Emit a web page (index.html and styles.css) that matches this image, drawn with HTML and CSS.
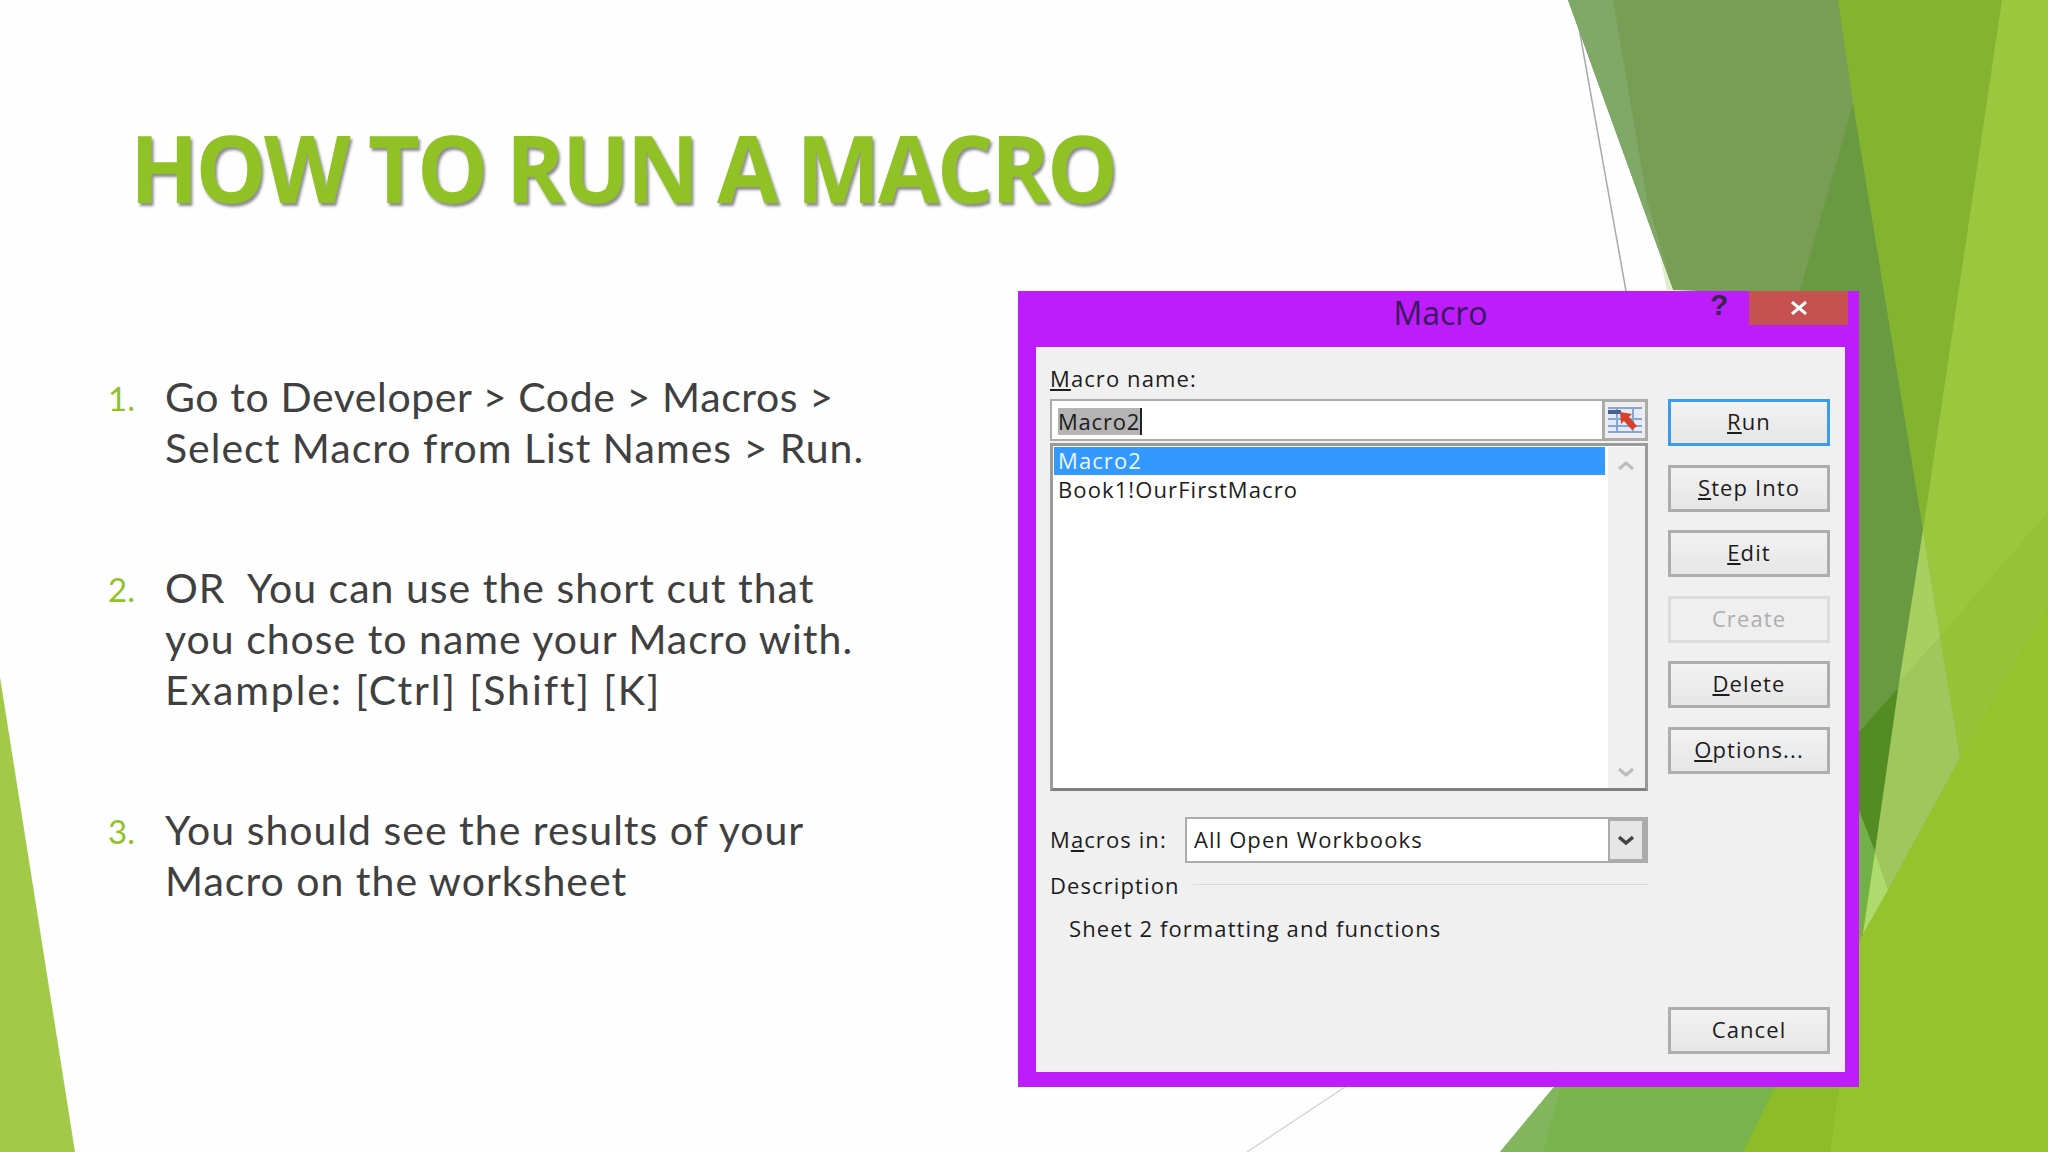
FILE: index.html
```html
<!DOCTYPE html>
<html lang="en">
<head>
<meta charset="utf-8">
<title>How to run a macro</title>
<link rel="stylesheet" href="styles.css">
</head>
<body>
<main class="slide">
  <svg class="backdrop" viewBox="0 0 2048 1152" aria-hidden="true">
    <polygon fill="#a3c948" points="0,677 75,1152 0,1152"/>
    <polygon fill="#84b32f" points="1838,0 2048,0 2048,1152 1743,1152 1850,700"/>
    <line class="rule-dark" x1="1574" y1="0" x2="1626" y2="291"/>
    <polygon fill="#789e55" points="1568,0 1838,0 1853,103 1800,295 1673,290"/>
    <polygon fill="#80a866" points="1568,0 1613,0 1647,200 1673,290"/>
    <polygon fill="#699a42" points="1853,103 1923,530 1899,687 1858,733 1800,733 1800,290"/>
    <polygon fill="#9ac73e" points="2002,0 2048,0 2048,513 1940,637 1923,530"/>
    <polygon fill="#95c338" points="1940,637 2048,513 2048,607 1960,758"/>
    <polygon fill="#528c22" points="1899,687 1875,852 1858,808 1850,808 1850,733 1858,733"/>
    <polygon fill="#72b04a" points="1850,808 1858,808 1875,852 1860,940 1850,950"/>
    <polygon fill="#78b34e" points="1500,1152 1554,1087 1860,1087 1743,1152"/>
    <polygon fill="#82b55d" points="1500,1152 1554,1087 1561,1087 1543,1152"/>
    <polygon fill="#8cbc28" points="1743,1152 1775,1087 1850,940 1860,940 1830,1152"/>
    <polygon fill="#93c42c" points="1830,1152 1839,1087 1860,940 1888,890 1960,758 2048,607 2048,1152"/>
    <polygon fill="#a8d060" points="1923,530 1940,637 1899,683"/>
    <polygon fill="#9fc75e" points="1899,683 1940,637 1960,758 1888,890 1875,852"/>
    <polygon fill="#aedb6e" points="1875,852 1888,890 1863,934"/>
    <polygon fill="#e2ecca" points="1660,257 1673,290 1667,290"/>
    <line class="rule-light" x1="1345" y1="1087" x2="1247" y2="1152"/>
  </svg>

  <h1 class="headline"><span class="headline-text">HOW TO RUN A MACRO</span></h1>

  <div class="content">
    <ol class="steps">
      <li><span><span class="tight">Go to Developer &gt; Code &gt; Macros &gt;</span><br>Select Macro from List Names &gt; Run.</span></li>
      <li><span>OR&nbsp; You can use the short cut that<br>you chose to name your Macro with.<br><span class="wide">Example: [Ctrl] [Shift] [K]</span></span></li>
      <li><span>You should see the results of your<br>Macro on the worksheet</span></li>
    </ol>

    <section class="dialog">
      <header class="titlebar">
        <span class="title">Macro</span>
        <span class="help">?</span>
        <span class="close">
          <svg viewBox="0 0 18 14" width="18" height="14" aria-hidden="true"><path d="M2 1 L16 13 M16 1 L2 13"/></svg>
        </span>
      </header>
      <div class="panel">
        <div class="left">
          <label class="label-name"><u>M</u>acro name:</label>
          <div class="name-row">
            <div class="name-field"><span class="sel">Macro2</span><i class="caret"></i></div>
            <div class="picker">
              <svg viewBox="0 0 34 30" width="34" height="30" aria-hidden="true">
                <rect x="0" y="2" width="34" height="26" fill="#e4ebf6"/>
                <path d="M0 3H34M0 14H34M0 21H34M0 27H34M9 3V27M25 3V27" stroke="#86a5d2" stroke-width="2" fill="none"/>
                <path d="M0 5H13V9H0Z" fill="#46618f"/>
                <path d="M12 7 L24 9 L21 12 L29 21 L24 25 L16 16 L13 19 Z" fill="#d8402a"/>
              </svg>
            </div>
          </div>
          <div class="listbox">
            <div class="items">
              <div class="item selected">Macro2</div>
              <div class="item">Book1!OurFirstMacro</div>
            </div>
            <div class="scroll">
              <svg viewBox="0 0 16 10" width="16" height="10" aria-hidden="true"><path d="M1 8 L8 2 L15 8"/></svg>
              <svg viewBox="0 0 16 10" width="16" height="10" aria-hidden="true"><path d="M1 2 L8 8 L15 2"/></svg>
            </div>
          </div>
          <div class="macros-in">
            <label class="label-in">M<u>a</u>cros in:</label>
            <div class="select">
              <span class="select-value">All Open Workbooks</span>
              <span class="select-btn">
                <svg viewBox="0 0 16 10" width="16" height="10" aria-hidden="true"><path d="M1 2 L8 8 L15 2"/></svg>
              </span>
            </div>
          </div>
          <div class="desc-head"><span>Description</span><i class="desc-line"></i></div>
          <p class="desc">Sheet 2 formatting and functions</p>
        </div>
        <div class="right">
          <button class="btn default"><u>R</u>un</button>
          <button class="btn"><u>S</u>tep Into</button>
          <button class="btn"><u>E</u>dit</button>
          <button class="btn disabled">Create</button>
          <button class="btn"><u>D</u>elete</button>
          <button class="btn"><u>O</u>ptions...</button>
          <button class="btn cancel">Cancel</button>
        </div>
      </div>
    </section>
  </div>
</main>
</body>
</html>
```
FILE: styles.css
```css
* { box-sizing: border-box; }
html, body { margin: 0; padding: 0; }
body { background: #fff; font-family: "Lato", "Liberation Sans", sans-serif; }

.slide {
  position: relative;
  width: 2048px;
  height: 1152px;
  overflow: hidden;
  background: #fefefe;
  display: flex;
  flex-direction: column;
}
.backdrop { position: absolute; inset: 0; width: 2048px; height: 1152px; }
.rule-dark { stroke: #a9a9a9; stroke-width: 1.5; }
.rule-light { stroke: #d0d0d0; stroke-width: 1.2; }

.headline {
  position: relative;
  margin: 0;
  height: 291px;
  padding: 109px 0 0 130px;
  font: 700 94px/116px "Open Sans", sans-serif;
  letter-spacing: -3px;
  color: #90c226;
  text-shadow: 2px 3px 3px rgba(0,0,0,.45);
}
.headline-text {
  display: inline-block;
  transform: scaleX(.952);
  transform-origin: left center;
}

.content {
  position: relative;
  display: flex;
  justify-content: space-between;
  padding: 0 189px 0 108px;
}

.steps {
  list-style: none;
  counter-reset: step;
  margin: 0;
  padding: 80px 0 0;
  font-size: 41px;
  line-height: 51px;
  letter-spacing: 1px;
  color: #404040;
}
.tight { letter-spacing: .6px; }
.wide { letter-spacing: 1.9px; }
.steps li {
  counter-increment: step;
  display: grid;
  grid-template-columns: 57px 1fr;
  margin-bottom: 89px;
  white-space: nowrap;
}
.steps li::before {
  content: counter(step) ".";
  color: #90c226;
  font-size: 33px;
  letter-spacing: 0;
  padding-top: 2px;
}

.dialog {
  width: 841px;
  height: 796px;
  background: #bd1dfb;
  display: flex;
  flex-direction: column;
  padding: 0 14px 15px 18px;
  font-family: "Open Sans", sans-serif;
  font-size: 22px;
  letter-spacing: 1.1px;
  color: #1c1c1c;
}
.titlebar {
  position: relative;
  flex: 0 0 56px;
  display: flex;
  align-items: center;
  justify-content: center;
  padding-bottom: 13px;
}
.title { font-size: 32px; letter-spacing: 0; color: #3a1a5c; }
.help {
  position: absolute;
  left: 674px;
  top: -2px;
  font: 700 30px/32px "Liberation Sans", sans-serif;
  color: #3a2550;
}
.close {
  position: absolute;
  left: 713px;
  top: 0;
  width: 99px;
  height: 34px;
  background: #c75050;
  display: flex;
  align-items: center;
  justify-content: center;
}
.close path { stroke: #fff; stroke-width: 3; fill: none; }

.panel {
  flex: 1;
  min-height: 0;
  background: #f0f0f1;
  display: flex;
  gap: 20px;
  padding: 0 15px 18px 14px;
}
.left { width: 598px; display: flex; flex-direction: column; }
.right { width: 162px; display: flex; flex-direction: column; gap: 18.6px; padding-top: 52px; }

.label-name { height: 52px; display: flex; align-items: flex-end; padding-bottom: 6px; white-space: pre; }

.name-row { display: flex; height: 42px; }
.name-field {
  width: 552px;
  background: #fff;
  border: 2px solid #ababab;
  border-right: 0;
  display: flex;
  align-items: center;
  padding: 2px 0 0 6px;
}
.sel { background: #b4b4b4; line-height: 27px; letter-spacing: .8px; }
.caret { width: 2px; height: 27px; background: #222; }
.picker {
  width: 46px;
  background: #eee;
  border: 3px solid #ababab;
  display: flex;
  align-items: center;
  justify-content: center;
}

.listbox {
  margin-top: 2px;
  height: 348px;
  background: #fff;
  border: 3px solid #9a9a9a;
  border-bottom-color: #808080;
  display: flex;
  padding: 1px 0 0 1px;
}
.items { flex: 1; }
.item { height: 28px; line-height: 26px; padding-left: 4px; }
.item + .item { padding-top: 1px; }
.selected { background: #3399ff; color: #eef6ff; }
.scroll {
  width: 37px;
  margin-left: 3px;
  background: #f0f0f1;
  display: flex;
  flex-direction: column;
  justify-content: space-between;
  align-items: center;
  padding: 14px 2px 11px 0;
}
.scroll path { stroke: #bcbcbc; stroke-width: 3; fill: none; }

.macros-in { margin-top: 26px; height: 46px; display: flex; align-items: center; }
.label-in { width: 135px; flex: none; padding-bottom: 3px; }
.select {
  flex: 1;
  height: 46px;
  background: #fff;
  border: 2px solid #ababab;
  display: flex;
  align-items: center;
  padding-left: 7px;
}
.select-value { flex: 1; padding-bottom: 3px; }
.select-btn {
  width: 38px;
  height: 42px;
  background: #e6e6e6;
  border-left: 2px solid #ababab;
  border-right: 4px solid #ababab;
  border-top: 2px solid #ababab;
  border-bottom: 2px solid #ababab;
  display: flex;
  align-items: center;
  justify-content: center;
}
.select-btn path { stroke: #444; stroke-width: 3.5; fill: none; }

.desc-head { margin-top: 8px; height: 28px; display: flex; align-items: center; gap: 13px; }
.desc-line { flex: 1; height: 1px; background: #d8d8d8; margin-top: -2px; }
.desc { margin: 15px 0 0 19px; line-height: 28px; }

.btn {
  height: 47px;
  flex: none;
  padding: 0 0 3px;
  font: inherit;
  letter-spacing: inherit;
  color: #1c1c1c;
  background: linear-gradient(#f2f2f2, #e6e6e6);
  border: 3px solid #adadad;
  border-radius: 0;
}
.default { border-color: #3c9bec; }
.disabled { color: #adadad; border-color: #dcdcdc; background: #efefef; }
.cancel { margin-top: auto; }
```
